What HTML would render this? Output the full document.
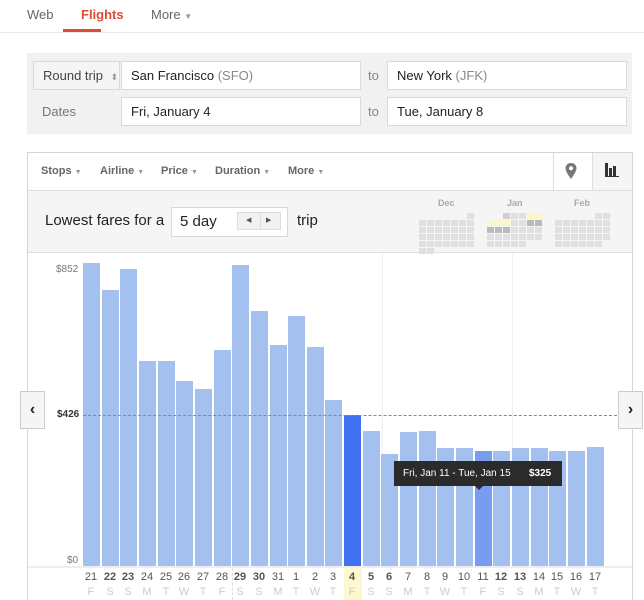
<!DOCTYPE html>
<html><head><meta charset="utf-8"><style>
*{margin:0;padding:0;box-sizing:border-box}
body{width:644px;height:600px;overflow:hidden;background:#fff;font-family:"Liberation Sans",Arial,sans-serif;position:relative;color:#222}
.a{position:absolute}
.tab{font-size:13px;color:#666;top:7px}
.inp{background:#fff;border:1px solid #d9d9d9;height:29px;font-size:13px;line-height:27px;padding-left:9px}
.g{color:#888}
.flt{font-size:11px;font-weight:bold;color:#666;top:165px}
.car{font-size:7px;color:#999}
.bar{position:absolute;background:#a4c0ee;width:17px;bottom:34px}
.dl{position:absolute;width:18px;text-align:center;font-size:11px;color:#555;top:571px}
.wl{position:absolute;width:18px;text-align:center;font-size:11px;color:#ccc;top:586px}
.cal{position:absolute;top:213px;display:grid;grid-template-columns:repeat(7,7px);gap:1px}
.cal i{display:block;height:6px;background:#e0e0e0}
.cal i.e{background:transparent}
.cal i.y{background:#fbf6c4}
.cal i.d{background:#b9b9b9}
.cal i.m{background:#d0d0d0}
</style></head><body>
<div class="a tab" style="left:27px">Web</div>
<div class="a tab" style="left:81px;color:#dd4b39;font-weight:bold">Flights</div>
<div class="a" style="left:63px;top:29px;width:38px;height:3px;background:#dd4b39"></div>
<div class="a tab" style="left:151px">More <span style="font-size:8px;color:#999">▼</span></div>
<div class="a" style="left:0;top:32px;width:644px;height:1px;background:#ebebeb"></div>

<div class="a" style="left:27px;top:53px;width:605px;height:81px;background:#f1f1f1"></div>
<div class="a inp" style="left:33px;top:61px;width:87px;background:#f5f5f5;color:#444">Round trip <span style="color:#999;font-size:9px;margin-left:4px">⬍</span></div>
<div class="a inp" style="left:121px;top:61px;width:240px">San Francisco <span class="g">(SFO)</span></div>
<div class="a" style="left:368px;top:68px;font-size:13px;color:#888">to</div>
<div class="a inp" style="left:387px;top:61px;width:240px">New York <span class="g">(JFK)</span></div>
<div class="a" style="left:42px;top:104px;font-size:13px;color:#777">Dates</div>
<div class="a inp" style="left:121px;top:97px;width:240px">Fri, January 4</div>
<div class="a" style="left:368px;top:104px;font-size:13px;color:#888">to</div>
<div class="a inp" style="left:387px;top:97px;width:240px">Tue, January 8</div>

<div class="a" style="left:27px;top:152px;width:606px;height:448px;border:1px solid #d4d4d4;border-bottom:none"></div>
<div class="a" style="left:28px;top:190px;width:604px;height:1px;background:#ddd"></div>
<div class="a flt" style="left:41px">Stops <span class="car">▼</span></div>
<div class="a flt" style="left:100px">Airline <span class="car">▼</span></div>
<div class="a flt" style="left:161px">Price <span class="car">▼</span></div>
<div class="a flt" style="left:215px">Duration <span class="car">▼</span></div>
<div class="a flt" style="left:288px">More <span class="car">▼</span></div>
<div class="a" style="left:553px;top:153px;width:1px;height:37px;background:#ddd"></div>
<div class="a" style="left:592px;top:153px;width:40px;height:37px;background:#f5f5f5;border-left:1px solid #ddd"></div>
<svg class="a" style="left:564px;top:162px" width="14" height="18" viewBox="0 0 14 18"><path d="M7 1C3.7 1 1.5 3.4 1.5 6.3 1.5 10 7 17 7 17s5.5-7 5.5-10.7C12.5 3.4 10.3 1 7 1z" fill="#777"/><circle cx="7" cy="6.3" r="2" fill="#fff"/></svg>
<svg class="a" style="left:605px;top:163px" width="14" height="14"><rect x="0" y="0" width="3" height="14" fill="#333"/><rect x="4" y="5" width="3" height="9" fill="#333"/><rect x="8" y="3" width="3" height="11" fill="#333"/><rect x="0" y="13" width="14" height="1" fill="#333"/></svg>

<div class="a" style="left:28px;top:191px;width:604px;height:62px;background:#f5f5f5;border-bottom:1px solid #e0e0e0"></div>
<div class="a" style="left:45px;top:212px;font-size:15px;color:#222">Lowest fares for a</div>
<div class="a" style="left:171px;top:207px;width:117px;height:30px;background:#fff;border:1px solid #d9d9d9;font-size:15px;line-height:28px;padding-left:8px">5 day</div>
<div class="a" style="left:237px;top:212px;width:44px;height:18px;background:#f1f1f1;border:1px solid #ddd;font-size:7px;color:#555;line-height:16px"><span style="position:absolute;left:8px">◀</span><span style="position:absolute;left:22px;top:0;width:1px;height:16px;background:#ddd"></span><span style="position:absolute;left:28px">▶</span></div>
<div class="a" style="left:297px;top:212px;font-size:15px;color:#222">trip</div>

<div class="a" style="left:438px;top:198px;font-size:9px;font-weight:bold;color:#aaa">Dec</div>
<div class="a" style="left:507px;top:198px;font-size:9px;font-weight:bold;color:#aaa">Jan</div>
<div class="a" style="left:574px;top:198px;font-size:9px;font-weight:bold;color:#aaa">Feb</div>
<div class="cal" style="left:419px">
<i class="e"></i><i class="e"></i><i class="e"></i><i class="e"></i><i class="e"></i><i class="e"></i><i></i>
<i></i><i></i><i></i><i></i><i></i><i></i><i></i>
<i></i><i></i><i></i><i></i><i></i><i></i><i></i>
<i></i><i></i><i></i><i></i><i></i><i></i><i></i>
<i></i><i></i><i></i><i></i><i></i><i></i><i></i>
<i></i><i></i></div>
<div class="cal" style="left:487px">
<i class="e"></i><i class="e"></i><i class="m"></i><i></i><i></i><i class="y"></i><i class="y"></i>
<i class="y"></i><i class="y"></i><i class="y"></i><i></i><i></i><i class="d"></i><i class="d"></i>
<i class="d"></i><i class="d"></i><i class="d"></i><i></i><i></i><i></i><i></i>
<i></i><i></i><i></i><i></i><i></i><i></i><i></i>
<i></i><i></i><i></i><i></i><i></i></div>
<div class="cal" style="left:555px">
<i class="e"></i><i class="e"></i><i class="e"></i><i class="e"></i><i class="e"></i><i></i><i></i>
<i></i><i></i><i></i><i></i><i></i><i></i><i></i>
<i></i><i></i><i></i><i></i><i></i><i></i><i></i>
<i></i><i></i><i></i><i></i><i></i><i></i><i></i>
<i></i><i></i><i></i><i></i><i></i><i></i></div>

<div class="a" style="left:382px;top:254px;width:1px;height:313px;background:#eee"></div>
<div class="a" style="left:512px;top:254px;width:1px;height:313px;background:#eee"></div>
<div class="a" style="left:56px;top:264px;font-size:10px;color:#777">$852</div>
<div class="a" style="left:57px;top:409px;font-size:10px;color:#333;font-weight:bold">$426</div>
<div class="a" style="left:67px;top:555px;font-size:10px;color:#777">$0</div>
<div id="bars"></div>
<div class="a" style="left:83px;top:415px;width:549px;border-top:1px dashed #888"></div>
<div class="a" style="left:28px;top:566px;width:604px;height:2px;background:#eee"></div>
<div class="a" style="left:344px;top:568px;width:18px;height:32px;background:#fdf8cf"></div>
<div class="a" style="left:232px;top:568px;height:32px;border-left:1px dashed #ddd"></div>
<div id="labels"></div>

<div class="a" style="left:394px;top:461px;width:168px;height:25px;background:#2b2b2b;color:#fff;font-size:10px;line-height:25px;padding-left:9px">Fri, Jan 11 - Tue, Jan 15<span style="font-weight:bold;position:absolute;left:135px">$325</span></div>
<div class="a" style="left:475px;top:486px;width:0;height:0;border-left:4px solid transparent;border-right:4px solid transparent;border-top:4px solid #2b2b2b"></div>

<div class="a" style="left:20px;top:391px;width:25px;height:38px;background:#f5f5f5;border:1px solid #ccc;font-size:16px;font-weight:bold;text-align:center;line-height:36px">‹</div>
<div class="a" style="left:618px;top:391px;width:25px;height:38px;background:#f5f5f5;border:1px solid #ccc;font-size:16px;font-weight:bold;text-align:center;line-height:36px">›</div>

<script>
var tops=[263,290,269,361,361,381,389,350,265,311,345,316,347,400,415,431,454,432,431,448,448,451,451,448,448,451,451,447];
var d=["21","22","23","24","25","26","27","28","29","30","31","1","2","3","4","5","6","7","8","9","10","11","12","13","14","15","16","17"];
var w="FSSMTWTFSSMTWTFSSMTWTFSSMTWT";
var bold={"22":1,"23":1,"29":1,"30":1,"4":1,"5":1,"6":1,"12":1,"13":1};
var h="";var l="";
for(var i=0;i<28;i++){var x=Math.round(83+i*18.65);
var c=i==14?"#4170f0":(i==21?"#789cef":"#a4c0ee");
h+='<div class="bar" style="left:'+x+'px;top:'+tops[i]+'px;background:'+c+'"></div>';
l+='<div class="dl" style="left:'+(x-1)+'px;'+(bold[d[i]]?'font-weight:bold;':'')+'">'+d[i]+'</div>';
l+='<div class="wl" style="left:'+(x-1)+'px">'+w[i]+'</div>';}
document.getElementById("bars").innerHTML=h;document.getElementById("labels").innerHTML=l;
</script>
</body></html>
